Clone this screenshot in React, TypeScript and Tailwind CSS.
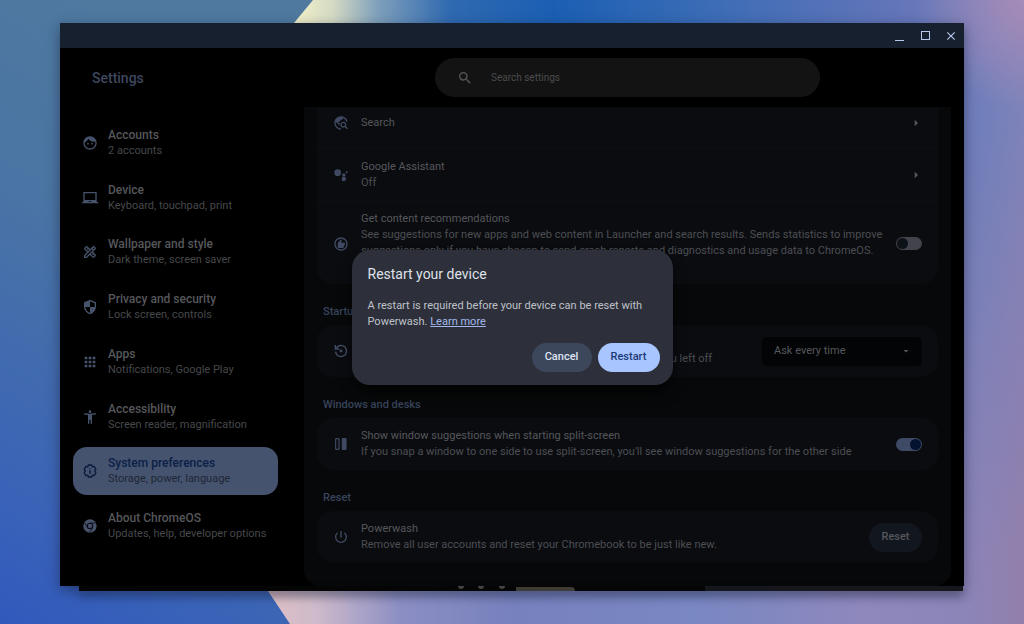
import type { ReactNode } from 'react';
import {
  MdAccessibilityNew,
  MdApps,
  MdArrowDropDown,
  MdArrowRight,
  MdClose,
  MdFace,
  MdLaptopChromebook,
  MdOutlineDesignServices,
  MdOutlineRecommend,
  MdPowerSettingsNew,
  MdSearch,
  MdSecurity,
  MdTravelExplore,
} from 'react-icons/md';

interface NavItem {
  label: string;
  detail: string;
  icon: ReactNode;
  selected?: boolean;
}

interface RowProps {
  icon: ReactNode;
  title: ReactNode;
  detail?: ReactNode;
  className?: string;
  textClassName?: string;
  children?: ReactNode;
}

function SystemIcon() {
  return (
    <svg viewBox="0 0 24 24" className="size-4" fill="none" stroke="currentColor" strokeWidth="2" strokeLinejoin="round">
      <path d="M9.5 3h5l.9 2.8 2.8-.6L20.8 9.400 19 12l1.800 2.600-2.600 4.200-2.800-.6-.9 2.800h-5l-.9-2.800-2.800.6L3.200 14.600 5 12 3.200 9.400l2.600-4.200 2.800.6z" />
      <path d="M12 11v5M12 8v1.500" />
    </svg>
  );
}

function ChromeIcon() {
  return (
    <svg viewBox="0 0 24 24" className="size-4">
      <circle cx="12" cy="12" r="10" fill="currentColor" />
      <path d="M12 7.500h8.800M8.100 14.300 3.700 6.600M15.900 14.300l-4.400 7.700" stroke="#000" strokeWidth="1" />
      <circle cx="12" cy="12" r="4.800" fill="#0b0e14" />
      <circle cx="12" cy="12" r="3.200" fill="currentColor" />
    </svg>
  );
}

function AssistantIcon() {
  return (
    <svg viewBox="0 0 24 24" className="size-4" fill="currentColor">
      <circle cx="7" cy="8.500" r="5" />
      <circle cx="16.200" cy="12" r="2.600" />
      <circle cx="16.200" cy="18" r="3.300" />
      <circle cx="20.500" cy="8" r="1.500" />
    </svg>
  );
}

function StartupIcon() {
  return (
    <svg viewBox="0 0 24 24" className="size-4" fill="none" stroke="currentColor" strokeWidth="2.200">
      <path d="M3.500 3v6h6" />
      <path d="M4.500 8.500A8.300 8.300 0 1 1 3.800 13" />
      <circle cx="12" cy="12" r="2.200" fill="currentColor" stroke="none" />
    </svg>
  );
}

function SplitIcon() {
  return (
    <svg viewBox="0 0 24 24" className="size-4" fill="none" stroke="currentColor" strokeWidth="1.800">
      <rect x="4" y="4" width="5" height="16" rx="1" />
      <rect x="14" y="4" width="5.500" height="16" rx="1" fill="currentColor" />
    </svg>
  );
}

const navItems: NavItem[] = [
  { label: 'Accounts', detail: '2 accounts', icon: <MdFace /> },
  { label: 'Device', detail: 'Keyboard, touchpad, print', icon: <MdLaptopChromebook /> },
  { label: 'Wallpaper and style', detail: 'Dark theme, screen saver', icon: <MdOutlineDesignServices /> },
  { label: 'Privacy and security', detail: 'Lock screen, controls', icon: <MdSecurity className="-scale-x-100" /> },
  { label: 'Apps', detail: 'Notifications, Google Play', icon: <MdApps /> },
  { label: 'Accessibility', detail: 'Screen reader, magnification', icon: <MdAccessibilityNew /> },
  { label: 'System preferences', detail: 'Storage, power, language', icon: <SystemIcon />, selected: true },
  { label: 'About ChromeOS', detail: 'Updates, help, developer options', icon: <ChromeIcon /> },
];

function Wallpaper() {
  return (
    <svg className="absolute inset-0 h-full w-full" viewBox="0 0 1024 624" preserveAspectRatio="none" aria-hidden="true">
      <defs>
        <linearGradient id="top" x1="0" x2="1" y1="0" y2="0">
          <stop offset="0.29" stopColor="#f0f0c8" />
          <stop offset="0.325" stopColor="#d5dac4" />
          <stop offset="0.37" stopColor="#7d9fbb" />
          <stop offset="0.44" stopColor="#2f69b0" />
          <stop offset="0.54" stopColor="#1b5fb3" />
          <stop offset="0.7" stopColor="#3d6db6" />
          <stop offset="0.88" stopColor="#6475b9" />
          <stop offset="0.96" stopColor="#717fbb" />
          <stop offset="1" stopColor="#7f83b9" />
        </linearGradient>
        <linearGradient id="bottom" x1="0" x2="1" y1="0" y2="0">
          <stop offset="0.26" stopColor="#e0bfc4" />
          <stop offset="0.31" stopColor="#cdbacb" />
          <stop offset="0.39" stopColor="#8c8fc4" />
          <stop offset="0.5" stopColor="#7781bd" />
          <stop offset="0.68" stopColor="#7987c2" />
          <stop offset="0.84" stopColor="#8e88bd" />
          <stop offset="0.94" stopColor="#8c85b8" />
          <stop offset="1" stopColor="#927fac" />
        </linearGradient>
        <linearGradient id="fade" x1="0" x2="0" y1="0" y2="1">
          <stop offset="0.2" stopColor="#fff" stopOpacity="0" />
          <stop offset="0.9" stopColor="#fff" />
        </linearGradient>
        <mask id="lower">
          <rect width="1024" height="624" fill="url(#fade)" />
        </mask>
        <radialGradient id="corner" gradientUnits="userSpaceOnUse" cx="1024" cy="0" r="110">
          <stop offset="0" stopColor="#a58bb8" />
          <stop offset="1" stopColor="#a58bb8" stopOpacity="0" />
        </radialGradient>
        <linearGradient id="left" x1="0.3" x2="0" y1="0" y2="1">
          <stop offset="0" stopColor="#4f799f" />
          <stop offset="0.35" stopColor="#4a74a4" />
          <stop offset="0.8" stopColor="#3a63b8" />
          <stop offset="1" stopColor="#3159bd" />
        </linearGradient>
      </defs>
      <rect width="1024" height="624" fill="url(#top)" />
      <rect width="1024" height="624" fill="url(#bottom)" mask="url(#lower)" />
      <rect width="1024" height="624" fill="url(#corner)" />
      <path d="M0 0h313l-19 23Q150 300 268 591l22 33H0z" fill="url(#left)" />
    </svg>
  );
}

function Row({ icon, title, detail, className = 'py-[10px]', textClassName = '', children }: RowProps) {
  return (
    <div className={`flex items-center px-4 ${className}`}>
      <span className="flex w-7 shrink-0 text-base text-[#3f4a62]">{icon}</span>
      <div className={`min-w-0 flex-1 text-[11px] leading-4 text-[#4c4e53] ${textClassName}`}>
        <p className="text-[#55575c]">{title}</p>
        {detail && <p>{detail}</p>}
      </div>
      {children}
    </div>
  );
}

function Toggle({ label, checked = false }: { label: string; checked?: boolean }) {
  return (
    <input
      type="checkbox"
      role="switch"
      aria-label={label}
      defaultChecked={checked}
      className="ml-2 flex h-[13px] w-[26px] shrink-0 cursor-pointer appearance-none items-center rounded-full bg-[#43444b] p-px before:size-[11px] before:rounded-full before:bg-[#0d1118] checked:justify-end checked:bg-[#3f4b66] checked:before:bg-[#03122e]"
    />
  );
}

function Section({ title, children }: { title: string; children: ReactNode }) {
  return (
    <section>
      <h2 className="px-[6px] pt-5 pb-[5px] text-[11px] leading-4 font-medium text-[#38445c]">{title}</h2>
      <div className="rounded-2xl bg-[#0b0c10]">{children}</div>
    </section>
  );
}

function RestartDialog() {
  return (
    <div className="absolute inset-0 flex items-center justify-center">
      <div role="dialog" aria-labelledby="dialog-title" className="w-[321px] rounded-[18px] bg-[#2d303a] px-4 pt-4 pb-[13px] shadow-lg shadow-black/60">
        <h2 id="dialog-title" className="text-[14px] leading-4 text-[#dfe1e8]">Restart your device</h2>
        <p className="mt-4 text-[11px] leading-4 text-[#bfc1c9]">
          A restart is required before your device can be reset with Powerwash.{' '}
          <a href="#powerwash" className="text-[#a2b8ea] underline">Learn more</a>
        </p>
        <div className="mt-[13px] -mr-[3px] flex justify-end gap-[6px] text-[11px] font-medium">
          <button type="button" className="h-[29px] w-[60px] cursor-pointer rounded-full bg-[#3d475b] text-[#dfe5f3]">Cancel</button>
          <button type="button" className="h-[29px] w-[62px] cursor-pointer rounded-full bg-[#a8c5ff] text-[#1b3a78]">Restart</button>
        </div>
      </div>
    </div>
  );
}

export default function App() {
  return (
    <div className="relative flex min-h-screen flex-col overflow-hidden px-[60px] pt-[23px] pb-[38px] font-[Roboto,'Liberation_Sans',sans-serif]">
      <Wallpaper />

      <div className="relative flex flex-1 flex-col shadow-[0_4px_12px_rgba(20,25,50,0.5)]">
        <header className="flex h-[25px] items-center justify-end gap-3 bg-[#17202e] pr-[6px] text-[#b7c7ee]">
          <button type="button" aria-label="Minimize" className="flex size-[14px] items-end justify-center pb-[2px]">
            <span className="h-px w-[9px] bg-current" />
          </button>
          <button type="button" aria-label="Maximize" className="flex size-[14px] items-center justify-center">
            <span className="size-[9px] border border-current" />
          </button>
          <button type="button" aria-label="Close" className="flex size-[14px] items-center justify-center text-[14px]">
            <MdClose />
          </button>
        </header>

        <div className="relative flex flex-1 flex-col bg-black">
          <div className="flex h-[59px] items-center">
            <h1 className="w-[375px] pl-8 text-[14px] leading-4 font-medium text-[#3d475e]">Settings</h1>
            <label className="flex h-[39px] w-[385px] items-center rounded-full bg-[#131313] pl-[22px]">
              <MdSearch className="text-base text-[#56575a]" />
              <input
                type="search"
                aria-label="Search settings"
                placeholder="Search settings"
                className="ml-[18px] flex-1 bg-transparent text-[10px] outline-none placeholder:text-[#4a4b4d]"
              />
            </label>
          </div>

          <div className="flex flex-1">
            <nav className="flex w-[244px] flex-col justify-between pt-3 pr-[26px] pb-9 pl-[13px]">
              {navItems.map((item) => (
                <a
                  key={item.label}
                  href="#settings"
                  aria-current={item.selected ? 'page' : undefined}
                  className={`flex h-12 items-center gap-[10px] rounded-[14px] pl-[9px] whitespace-nowrap ${item.selected ? 'bg-[#45536f]' : ''}`}
                >
                  <span className={`text-base ${item.selected ? 'text-[#0a1a3c]' : 'text-[#47526b]'}`}>{item.icon}</span>
                  <span>
                    <span className={`block text-[12px] leading-4 font-medium ${item.selected ? 'text-[#0b1f47]' : 'text-[#55575b]'}`}>{item.label}</span>
                    <span className={`block text-[11px] leading-4 ${item.selected ? 'text-[#1f2634]' : 'text-[#46484b]'}`}>{item.detail}</span>
                  </span>
                </a>
              ))}
            </nav>

            <main className="mr-[13px] flex-1 rounded-b-2xl bg-[#070809] px-[13px] pb-[22px]">
              <div className="divide-y divide-[#0e0f13] rounded-b-2xl bg-[#0b0c10]">
                <Row icon={<MdTravelExplore />} title="Search" className="pt-2 pb-[17px]">
                  <MdArrowRight className="mr-[-2px] text-base text-[#55575c]" />
                </Row>
                <Row icon={<AssistantIcon />} title="Google Assistant" detail="Off">
                  <MdArrowRight className="mr-[-2px] text-base text-[#55575c]" />
                </Row>
                <Row
                  icon={<MdOutlineRecommend />}
                  title="Get content recommendations"
                  detail="See suggestions for new apps and web content in Launcher and search results. Sends statistics to improve suggestions only if you have chosen to send crash reports and diagnostics and usage data to ChromeOS."
                  className="pt-[9px] pb-2"
                  textClassName="pb-[17px]"
                >
                  <Toggle label="Get content recommendations" />
                </Row>
              </div>

              <Section title="Startup">
                <Row
                  icon={<StartupIcon />}
                  title={<label htmlFor="startup">Restore apps on startup</label>}
                  detail="Choose whether to open all your apps and pages from where you left off"
                >
                  <div className="relative">
                    <select id="startup" className="h-[29px] w-40 appearance-none rounded-[5px] bg-[#030405] px-3 text-[11px] text-[#55575c]">
                      <option>Ask every time</option>
                      <option>Always restore</option>
                      <option>Do not restore</option>
                    </select>
                    <MdArrowDropDown className="pointer-events-none absolute top-2 right-[10px] text-xs text-[#55575c]" />
                  </div>
                </Row>
              </Section>

              <Section title="Windows and desks">
                <Row
                  icon={<SplitIcon />}
                  title="Show window suggestions when starting split-screen"
                  detail="If you snap a window to one side to use split-screen, you'll see window suggestions for the other side"
                >
                  <Toggle label="Show window suggestions" checked />
                </Row>
              </Section>

              <Section title="Reset">
                <Row
                  icon={<MdPowerSettingsNew />}
                  title="Powerwash"
                  detail="Remove all user accounts and reset your Chromebook to be just like new."
                >
                  <button type="button" className="h-[29px] w-[53px] cursor-pointer rounded-full bg-[#12161e] text-[11px] font-medium text-[#55575c]">Reset</button>
                </Row>
              </Section>
            </main>
          </div>

          <RestartDialog />
        </div>

        {/* edge of the window behind, below the settings window */}
        <div className="absolute top-full right-px left-[19px] flex h-[5px] bg-[#050505] shadow-[0_5px_8px_rgba(20,25,50,0.5)]">
          <span className="w-[42%]" />
          <span className="flex w-[7%] justify-around">
            <span className="h-[3px] w-[6px] rounded-b-full bg-[#444]" />
            <span className="h-[3px] w-[6px] rounded-b-full bg-[#444]" />
            <span className="h-[3px] w-[6px] rounded-b-full bg-[#444]" />
          </span>
          <span className="mt-px ml-1 w-[59px] rounded-tr-sm bg-[#3f3c35]" />
          <span className="ml-auto w-[258px] bg-[#15171d]" />
        </div>
      </div>
    </div>
  );
}
